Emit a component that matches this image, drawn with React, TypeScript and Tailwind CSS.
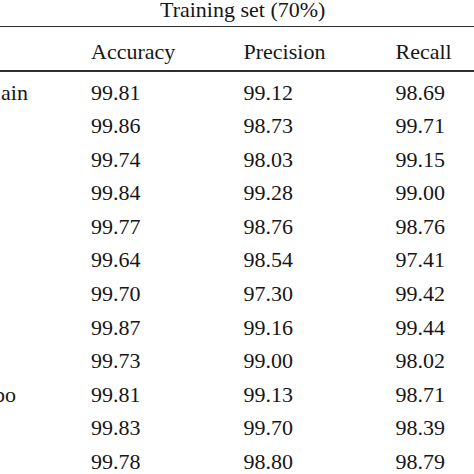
import React from "react";

const rows: [string, string, string, string][] = [
  ["ain", "99.81", "99.12", "98.69"],
  ["", "99.86", "98.73", "99.71"],
  ["", "99.74", "98.03", "99.15"],
  ["", "99.84", "99.28", "99.00"],
  ["", "99.77", "98.76", "98.76"],
  ["", "99.64", "98.54", "97.41"],
  ["", "99.70", "97.30", "99.42"],
  ["", "99.87", "99.16", "99.44"],
  ["", "99.73", "99.00", "98.02"],
  ["bo", "99.81", "99.13", "98.71"],
  ["", "99.83", "99.70", "98.39"],
  ["", "99.78", "98.80", "98.79"],
];

export default function App() {
  return (
    <div className="w-[474px] h-[474px] overflow-hidden bg-white text-[#161616] text-[22px] font-['Liberation_Serif','Times_New_Roman',serif]">
      <div className="h-[25.5px] leading-[20px] pl-[160px] whitespace-nowrap">Training set (70%)</div>
      <div className="h-[1.5px] bg-[#2e2e2e]" />
      <div className="grid grid-cols-[91px_152.5px_152px_1fr] h-[43px] pt-[13px] leading-[24px] whitespace-nowrap">
        <div />
        <div>Accuracy</div>
        <div>Precision</div>
        <div>Recall</div>
      </div>
      <div className="h-[1.5px] bg-[#2e2e2e]" />
      <div className="pt-[4px] leading-[33.6px]">
        {rows.map((r, i) => (
          <div key={i} className="grid grid-cols-[91px_152.5px_152px_1fr] whitespace-nowrap">
            <div className="overflow-hidden">
              {r[0] === "bo" ? (
                <span className="ml-[-6px]">bo</span>
              ) : (
                <span className="ml-[1px]">{r[0]}</span>
              )}
            </div>
            <div>{r[1]}</div>
            <div>{r[2]}</div>
            <div>{r[3]}</div>
          </div>
        ))}
      </div>
    </div>
  );
}
